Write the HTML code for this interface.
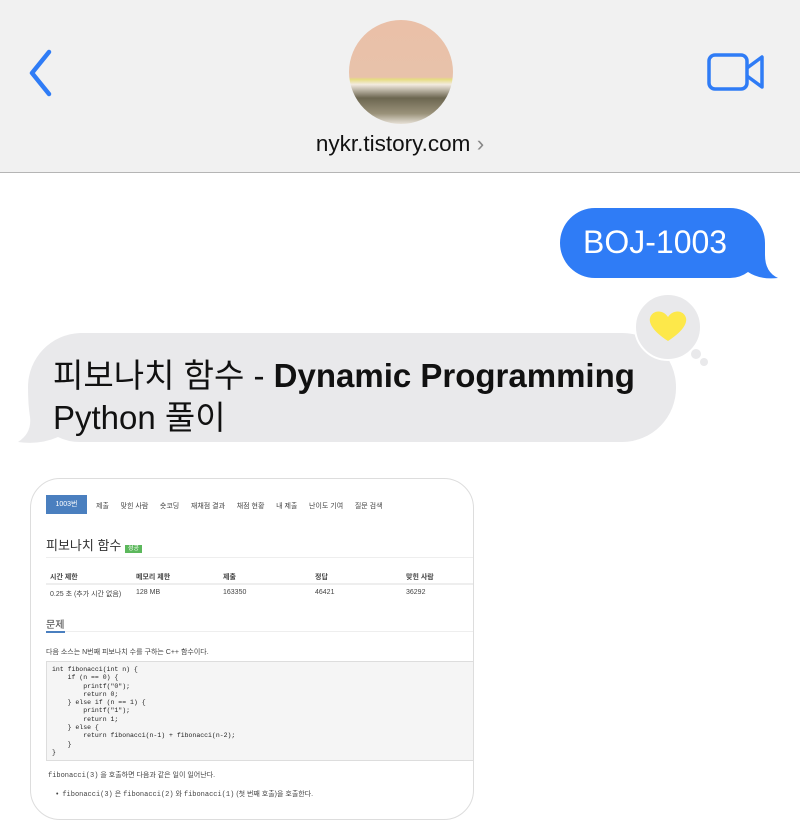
<!DOCTYPE html>
<html><head><meta charset="utf-8"><style>
body{margin:0;width:800px;height:800px;overflow:hidden;background:#fff;font-family:"Liberation Sans","Noto Sans CJK KR",sans-serif;position:relative}
.hdr{position:absolute;left:0;top:0;width:800px;height:172px;background:#f1f1f1;border-bottom:1px solid #b5b5b5}
.av{position:absolute;left:349px;top:20px;width:104px;height:104px;border-radius:50%;overflow:hidden;background:linear-gradient(#eac0a8 0,#e8c2aa 55%,#e6dc80 57%,#f3ebe0 62%,#6c6650 75%,#9a927a 90%,#e8e2d8 100%)}
.name{position:absolute;left:0;width:800px;top:131px;text-align:center;font-size:22.5px;color:#111}
.b{position:absolute;font-size:33px;color:#111;white-space:nowrap}
.shot{position:absolute;left:30px;top:478px;width:442px;height:340px;border:1px solid #ddd;border-radius:30px;overflow:hidden;background:#fff;font-size:7px;color:#444}
.s{position:absolute;white-space:pre}
.mono{font-family:"Liberation Mono",monospace}
</style></head><body>
<div class="hdr">
<svg style="position:absolute;left:24px;top:48px" width="32" height="50"><path d="M25 4 L8 25 L25 46" fill="none" stroke="#2f7cf6" stroke-width="4.5" stroke-linecap="round" stroke-linejoin="round"/></svg>
<svg style="position:absolute;left:706px;top:52px" width="62" height="42"><rect x="3" y="3" width="38" height="34" rx="6" fill="none" stroke="#2f7cf6" stroke-width="3.5"/><path d="M41 16 L56 5 L56 35 L41 24" fill="none" stroke="#2f7cf6" stroke-width="3.5" stroke-linejoin="round"/></svg>
<div class="av"></div>
<div class="name">nykr.tistory.com <span style="color:#888">›</span></div>
</div>
<svg style="position:absolute;left:550px;top:200px" width="240" height="90"><path d="M45 8 H180 A35 35 0 0 1 215 43 V55 Q215 72 228 78 Q210 80 198 72 Q190 78 180 78 H45 A35 35 0 0 1 10 43 A35 35 0 0 1 45 8Z" fill="#2f7cf6"/></svg>
<div class="b" style="left:583px;top:224px;color:#fff;font-size:32px">BOJ-1003</div>
<svg style="position:absolute;left:10px;top:325px" width="680" height="125"><path d="M70 8 H612 A54 54 0 0 1 666 62 A54 54 0 0 1 612 117 H70 Q58 117 48 112 Q30 120 8 117 Q22 108 20 92 Q18 80 18 62 A54 54 0 0 1 70 8Z" fill="#e9e9eb"/></svg>
<div class="b" style="left:53px;top:349px">피보나치 함수 - <b>Dynamic Programming</b></div>
<div class="b" style="left:53px;top:391px">Python 풀이</div>
<div style="position:absolute;left:634px;top:293px;width:64px;height:64px;border-radius:50%;background:#e9e9eb;border:2px solid #fff"></div>
<div style="position:absolute;left:690px;top:348px;width:10px;height:10px;border-radius:50%;background:#e9e9eb;border:1px solid #fff"></div>
<div style="position:absolute;left:700px;top:358px;width:8px;height:8px;border-radius:50%;background:#e9e9eb"></div>
<svg style="position:absolute;left:648px;top:309px" width="40" height="34"><path d="M20 32 C3 21 1 13 2 9 C4 1 15 0 20 8 C25 0 36 1 38 9 C39 13 37 21 20 32Z" fill="#fde84a"/></svg>
<div class="shot">
<div class="s" style="left:15px;top:16px;width:41px;height:19px;background:#4a7fbf;color:#fff;line-height:19px;text-align:center">1003번</div>
<div class="s" style="left:65px;top:22px">제출      맞힌 사람      숏코딩      재채점 결과      채점 현황      내 제출      난이도 기여      질문 검색</div>
<div class="s" style="left:15px;top:56px;font-size:13px;color:#333">피보나치 함수 <span style="background:#5cb85c;color:#fff;font-size:6px;padding:1px 3px">성공</span></div>
<div style="position:absolute;left:15px;top:78px;width:430px;border-top:1px solid #eee"></div>
<div class="s" style="left:19px;top:93px;font-weight:bold">시간 제한</div><div class="s" style="left:105px;top:93px;font-weight:bold">메모리 제한</div><div class="s" style="left:192px;top:93px;font-weight:bold">제출</div><div class="s" style="left:284px;top:93px;font-weight:bold">정답</div><div class="s" style="left:375px;top:93px;font-weight:bold">맞힌 사람</div>
<div style="position:absolute;left:15px;top:104px;width:430px;border-top:2px solid #eee"></div>
<div class="s" style="left:19px;top:110px">0.25 초 (추가 시간 없음)</div><div class="s" style="left:105px;top:110px">128 MB</div><div class="s" style="left:192px;top:110px">163350</div><div class="s" style="left:284px;top:110px">46421</div><div class="s" style="left:375px;top:110px">36292</div>
<div class="s" style="left:15px;top:137px;font-size:10px;color:#333">문제</div>
<div style="position:absolute;left:15px;top:152px;width:19px;border-top:2px solid #4a7fbf"></div>
<div style="position:absolute;left:34px;top:152px;width:410px;border-top:1px solid #eee"></div>
<div class="s" style="left:15px;top:168px">다음 소스는 N번째 피보나치 수를 구하는 C++ 함수이다.</div>
<div class="s mono" style="left:15px;top:182px;width:430px;height:100px;background:#f5f5f5;border:1px solid #ddd;padding:4px 5px;box-sizing:border-box;line-height:8.3px;font-size:6.5px;color:#222">int fibonacci(int n) {
    if (n == 0) {
        printf("0");
        return 0;
    } else if (n == 1) {
        printf("1");
        return 1;
    } else {
        return fibonacci(n-1) + fibonacci(n-2);
    }
}</div>
<div class="s" style="left:17px;top:291px"><span class="mono">fibonacci(3)</span> 을 호출하면 다음과 같은 일이 일어난다.</div>
<div class="s" style="left:25px;top:310px">•  <span class="mono">fibonacci(3)</span> 은 <span class="mono">fibonacci(2)</span> 와 <span class="mono">fibonacci(1)</span> (첫 번째 호출)을 호출한다.</div>
</div>
</body></html>
